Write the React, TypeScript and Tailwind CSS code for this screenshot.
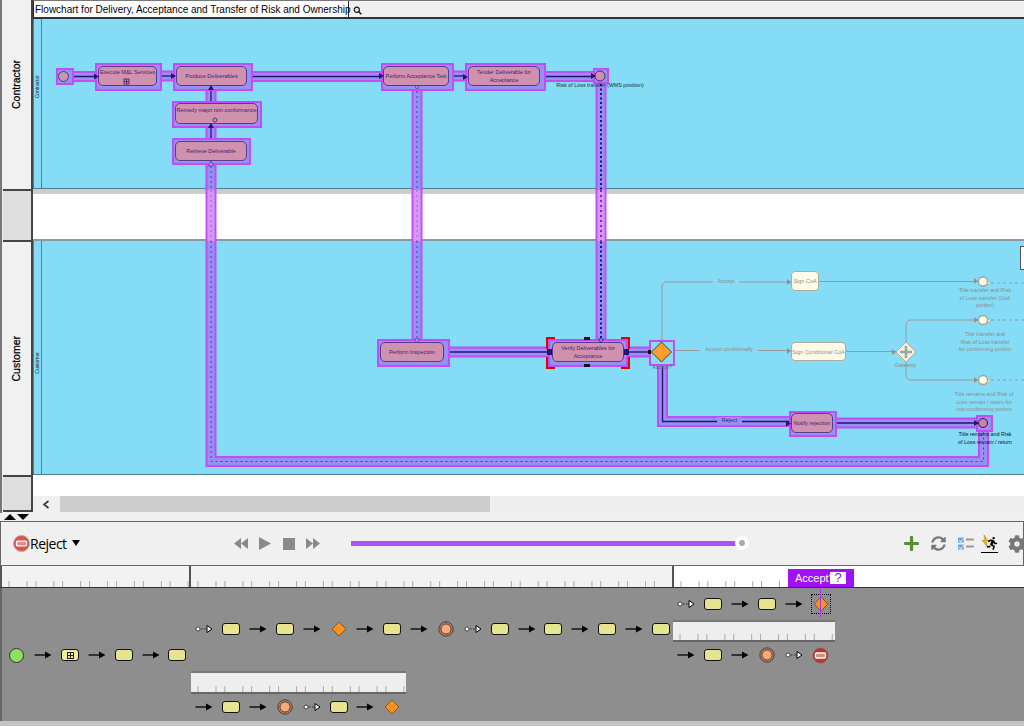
import React from "react";
import { FaCog, FaPlus, FaRunning, FaSyncAlt } from "react-icons/fa";

function Band({ d, dash, light }: { d: string; dash?: boolean; light?: boolean }) {
  return (
    <g fill="none" strokeLinejoin="miter">
      <path d={d} stroke="#c24cf6" strokeWidth={11} />
      <path d={d} stroke="#9490f5" strokeWidth={7} />
      <path d={d} stroke={light ? "#4a3ab8" : "#2a1170"} strokeWidth={light ? 1 : dash ? 2 : 1.3} strokeDasharray={dash ? (light ? "2 3" : "2 2.5") : undefined} />
    </g>
  );
}

function GapBand({ x, dark }: { x: number; dark?: boolean }) {
  return (
    <g fill="none">
      <path d={`M${x} 190V241`} stroke="#d995f8" strokeWidth={7} />
      <path d={`M${x} 190V241`} stroke={dark ? "#7a30c0" : "#a060d8"} strokeWidth={dark ? 2 : 1} strokeDasharray="2 3" />
    </g>
  );
}

function Node({ x, y, w, h, hx, hy, hw, hh, lines, plain }: { x: number; y: number; w: number; h: number; hx?: number; hy?: number; hw?: number; hh?: number; lines: string[]; plain?: boolean }) {
  return (
    <>
      {hx !== undefined && (
        <div className="absolute border-2 border-[#c24cf6] bg-[#9490f5]" style={{ left: hx, top: hy, width: hw, height: hh }} />
      )}
      <div
        className={
          plain
            ? "absolute flex flex-col items-center justify-center rounded-[4px] border border-[#b3ab98] bg-[#fffbe9] text-[5.5px] leading-[8px] text-[#8f8f8f]"
            : "absolute flex flex-col items-center justify-center rounded-[5px] border border-[#5a3a8a] bg-[#cf91ae] text-[5.5px] leading-[8px] text-[#45206e]"
        }
        style={{ left: x, top: y, width: w, height: h }}
      >
        {lines.map((l) => (
          <span key={l} className="whitespace-nowrap">{l}</span>
        ))}
      </div>
    </>
  );
}

function Label({ x, y, w, lines, cls }: { x: number; y: number; w: number; lines: string[]; cls: string }) {
  return (
    <div className={"absolute text-center text-[5.4px] leading-[7.5px] " + cls} style={{ left: x, top: y, width: w }}>
      {lines.map((l) => (
        <div key={l} className="whitespace-nowrap">{l}</div>
      ))}
    </div>
  );
}

function Ruler({ w }: { w: number }) {
  const ticks: number[] = [];
  for (let c = 0; c * 26.85 < w; c += 1) {
    ticks.push(c * 26.85 + 7, c * 26.85 + 25);
  }
  return (
    <svg width={w} height={6} className="absolute bottom-0 left-0">
      {ticks.filter((t) => t < w).map((t, i) => (
        <line key={i} x1={t} x2={t} y1={0} y2={6} stroke="#a8a8a8" />
      ))}
    </svg>
  );
}

function Cell({ children }: { children?: React.ReactNode }) {
  return <div className="flex h-5 w-[26.85px] shrink-0 items-center justify-center">{children}</div>;
}

function Arrow() {
  return (
    <svg width="18" height="10" viewBox="0 0 18 10" className="shrink-0">
      <line x1="0.5" y1="5" x2="12" y2="5" stroke="#000" strokeWidth="1.3" />
      <polygon points="11,1.5 17.5,5 11,8.5" fill="#000" />
    </svg>
  );
}

function Dotted() {
  return (
    <svg width="18" height="10" viewBox="0 0 18 10" className="shrink-0">
      <circle cx="3" cy="5" r="2" fill="#fff" stroke="#222" strokeWidth="0.8" />
      <line x1="6" y1="5" x2="12" y2="5" stroke="#222" strokeDasharray="1.5 1.5" />
      <polygon points="12,1.5 17,5 12,8.5" fill="#fff" stroke="#000" />
    </svg>
  );
}

function Task({ sub }: { sub?: boolean }) {
  return (
    <div className={"flex h-3 w-[18px] shrink-0 items-center justify-center rounded-[3px] border-[1.5px] border-[#111] " + (sub ? "bg-[#f2eba0]" : "bg-[#e6e48f]")}>
      {sub && (
        <svg width="7" height="7" viewBox="0 0 7 7">
          <rect x="0.5" y="0.5" width="6" height="6" fill="none" stroke="#222" />
          <path d="M3.5 0.5V6.5M0.5 3.5H6.5" stroke="#222" />
        </svg>
      )}
    </div>
  );
}

function Diamond() {
  return (
    <svg width="16" height="16" viewBox="0 0 16 16" className="shrink-0">
      <polygon points="8,1 15,8 8,15 1,8" fill="#f7901e" stroke="#6b4a10" strokeWidth="0.8" />
    </svg>
  );
}

function Ring() {
  return (
    <svg width="16" height="16" viewBox="0 0 16 16" className="shrink-0">
      <circle cx="8" cy="8" r="7.2" fill="#b97a55" stroke="#333" strokeWidth="0.8" />
      <circle cx="8" cy="8" r="5" fill="#fbab7b" stroke="#333" strokeWidth="0.8" />
    </svg>
  );
}

const A = () => <Cell><Arrow /></Cell>;
const D = () => <Cell><Dotted /></Cell>;
const T = () => <Cell><Task /></Cell>;
const G = () => <Cell><Diamond /></Cell>;
const R = () => <Cell><Ring /></Cell>;

function TimelineRuler({ w, cls }: { w: number; cls: string }) {
  return (
    <div className={"relative shrink-0 border-t-2 border-b-2 border-t-[#777] border-b-[#666] bg-[#eeeeee] " + cls} style={{ width: w }}>
      <Ruler w={w} />
    </div>
  );
}

export default function App() {
  return (
    <div className="flex h-[726px] w-[1024px] flex-col overflow-hidden bg-[#f0f0f0] font-['Liberation_Sans',sans-serif] text-black">
      <div className="relative flex h-[513px] shrink-0">
        <div className="flex w-[33px] shrink-0 flex-col border-l-2 border-l-[#777] pl-[1px]">
          <div className="flex h-[189px] shrink-0 items-center justify-center border-r-2 border-r-[#444] bg-[#f1f1f1] pb-[19px]">
            <span className="rotate-180 text-[10.5px] text-black [writing-mode:vertical-rl] [-webkit-text-stroke:0.25px_#000]">Contractor</span>
          </div>
          <div className="h-[53px] shrink-0 border-y-2 border-r-2 border-[#444] bg-[#dedede]" />
          <div className="flex h-[233px] shrink-0 items-center justify-center border-r-2 border-r-[#444] bg-[#f1f1f1]">
            <span className="rotate-180 text-[10.5px] text-black [writing-mode:vertical-rl] [-webkit-text-stroke:0.25px_#000]">Customer</span>
          </div>
          <div className="h-[37px] shrink-0 border-y-2 border-r-2 border-[#444] bg-[#dedede]" />
        </div>
        <div className="flex min-w-0 flex-1 flex-col">
          <div className="flex h-[19px] shrink-0 items-stretch border-t border-t-[#777] border-b-2 border-b-[#333] bg-[#f0f0f0]">
            <div className="flex w-[316px] items-center whitespace-nowrap border-x border-[#222] bg-white pl-[1px] pt-[1px] text-[10px]">
              Flowchart for Delivery, Acceptance and Transfer of Risk and Ownership
            </div>
            <div className="flex w-[16px] items-center justify-center pt-[3px]">
              <svg width="9" height="9" viewBox="0 0 9 9">
                <circle cx="3.8" cy="3.8" r="2.6" fill="none" stroke="#111" strokeWidth="1.2" />
                <path d="M5.8 5.8L8.3 8.3" stroke="#111" strokeWidth="1.5" />
              </svg>
            </div>
          </div>
          <div className="flex h-[170px] shrink-0 border-b border-b-[#4d7f8f] bg-[#84dcf6]">
            <div className="flex w-[9px] shrink-0 items-center justify-center border-x border-x-[#3f8a9f] pb-[34px]">
              <span className="rotate-180 text-[5px] text-[#222] [writing-mode:vertical-rl]">Contractor</span>
            </div>
          </div>
          <div className="h-[5px] shrink-0 bg-[#cdcdcd]" />
          <div className="h-[47px] shrink-0 border-b-[2px] border-b-[#8a9aa0] bg-white" />
          <div className="flex h-[234px] shrink-0 border-b border-b-[#4d7f8f] bg-[#84dcf6]">
            <div className="flex w-[9px] shrink-0 items-center justify-center border-x border-x-[#3f8a9f] pt-[10px]">
              <span className="rotate-180 text-[5px] text-[#222] [writing-mode:vertical-rl]">Customer</span>
            </div>
          </div>
          <div className="h-[20px] shrink-0 bg-white" />
          <div className="flex h-[17px] shrink-0 border-t border-t-white bg-[#eeeeee]">
            <div className="flex w-[27px] items-center justify-center bg-[#f0f0f0] pr-[2px]">
              <svg width="8" height="9" viewBox="0 0 8 9">
                <path d="M6.5 1L2 4.5L6.5 8" fill="none" stroke="#333" strokeWidth="1.6" />
              </svg>
            </div>
            <div className="w-[430px] bg-[#cdcdcd]" />
          </div>
        </div>

        {/* free canvas: diagram */}
        <div className="absolute inset-0">
          <svg width="1024" height="513" className="absolute left-0 top-0">
            <g fill="none" stroke="#9a9a9a" strokeWidth="1">
              <path d="M662 342V287Q662 282 667 282H791" />
              <path d="M675 350.5H791" />
              <path d="M819 281.5H978" />
              <path d="M846 351.5H896" />
              <path d="M906 342V325Q906 320 911 320H978" />
              <path d="M906 362V375Q906 380 911 380H978" />
              <path d="M991 283H1024M991 320H1024M991 380H1024" strokeDasharray="3 3" />
            </g>
            <Band d="M63 76.5H98" />
            <Band d="M157 76H176" />
            <Band d="M247 76.5H383" />
            <Band d="M449 76H468" />
            <Band d="M540 76.5H600" />
            <Band d="M211 86V103" />
            <Band d="M211 124V141" />
            <Band d="M211 161V461.5H983.5V428" dash light />
            <Band d="M417 86V342" dash light />
            <Band d="M601 84V342" dash />
            <Band d="M444 352H552" />
            <Band d="M624 352H650" />
            <Band d="M662.5 364V421.5H791" />
            <Band d="M833 423H983" />
            <GapBand x={211} />
            <GapBand x={417} />
            <GapBand x={601} dark />
          </svg>

          <div className="absolute left-[56px] top-[68px] h-[17px] w-[18px] border-2 border-[#c24cf6] bg-[#9490f5]" />
          <Node hx={95} hy={63} hw={67} hh={28} x={98} y={66} w={59} h={20} lines={["Execute M&L Services", "\u00a0"]} />
          <Node hx={173} hy={63} hw={80} hh={28} x={176} y={66} w={71} h={20} lines={["Produce Deliverables"]} />
          <Node hx={172} hy={101} hw={90} hh={27} x={175} y={103} w={83} h={21} lines={["Remedy major non-conformance", "\u00a0"]} />
          <Node hx={172} hy={138} hw={79} hh={27} x={175} y={141} w={72} h={20} lines={["Retrieve Deliverable"]} />
          <Node hx={381} hy={63} hw={73} hh={28} x={383} y={66} w={66} h={20} lines={["Perform Acceptance Test"]} />
          <Node hx={465} hy={63} hw={81} hh={28} x={468} y={66} w={72} h={20} lines={["Tender Deliverable for", "Acceptance"]} />
          <div className="absolute left-[593px] top-[68px] h-[16px] w-[16px] border-2 border-[#c24cf6] bg-[#9490f5]" />
          <Node hx={377} hy={339} hw={73} hh={28} x={380} y={342} w={64} h={20} lines={["Perform Inspection"]} />

          {/* selection corners */}
          <div className="absolute left-[546px] top-[337px] h-[12px] w-[9px] border-l-[3px] border-t-[3px] border-[#e00000]" />
          <div className="absolute left-[621px] top-[337px] h-[12px] w-[9px] border-r-[3px] border-t-[3px] border-[#e00000]" />
          <div className="absolute left-[546px] top-[357px] h-[12px] w-[9px] border-b-[3px] border-l-[3px] border-[#e00000]" />
          <div className="absolute left-[621px] top-[357px] h-[12px] w-[9px] border-b-[3px] border-r-[3px] border-[#e00000]" />
          <Node hx={548} hy={339} hw={80} hh={28} x={552} y={342} w={72} h={20} lines={["Verify Deliverables for", "Acceptance"]} />

          <div className="absolute left-[649px] top-[340px] h-[26px] w-[26px] border-2 border-[#c24cf6] bg-[#84dcf6]" />
          <Node hx={789} hy={411} hw={48} hh={26} x={791} y={413} w={42} h={20} lines={["Notify rejection"]} />
          <div className="absolute left-[976px] top-[415px] h-[17px] w-[17px] border-2 border-[#c24cf6] bg-[#9490f5]" />
          <Node plain x={791} y={271} w={28} h={20} lines={["Sign CoA"]} />
          <Node plain x={791} y={342} w={55} h={19} lines={["Sign Conditional CoA"]} />

          <div className="absolute left-[1020px] top-[246px] h-[24px] w-[4px] border-y border-l border-[#555] bg-white" />

          <Label x={540} y={82} w={120} cls="text-[#1a3040]" lines={["Risk of Loss transfer (WMS position)"]} />
          <Label x={945} y={287} w={80} cls="text-[#8c8c8c]" lines={["Title transfer and Risk", "of Loss transfer (CoA", "portion)"]} />
          <Label x={945} y={331} w={80} cls="text-[#8c8c8c]" lines={["Title transfer and", "Risk of Loss transfer", "for conforming portion"]} />
          <Label x={944} y={391} w={80} cls="text-[#8c8c8c]" lines={["Title remains and Risk of", "Loss remain / return for", "non-conforming portion"]} />
          <Label x={945} y={431} w={80} cls="text-[#101820]" lines={["Title remains and Risk", "of Loss remain / return"]} />
          <Label x={895} y={362} w={20} cls="text-[#8c8c8c]" lines={["Gateway"]} />
          <Label x={652} y={364} w={20} cls="text-[#5a6a8a]" lines={["Accept?"]} />
          <Label x={713} y={278} w={26} cls="bg-[#84dcf6] text-[#8c8c8c]" lines={["Accept"]} />
          <Label x={700} y={346} w={58} cls="bg-[#84dcf6] text-[#8c8c8c]" lines={["Accept conditionally"]} />
          <Label x={717} y={417} w={25} cls="bg-[#9490f5] text-[#45206e]" lines={["Reject"]} />

          <svg width="1024" height="513" className="pointer-events-none absolute left-0 top-0">
            <circle cx="63.5" cy="76.5" r="5" fill="#c795b2" stroke="#4a3a7a" />
            <circle cx="600" cy="76" r="5" fill="#cf91ae" stroke="#4a2a70" />
            <circle cx="983" cy="423" r="4.5" fill="#cf7fa0" stroke="#2a1a50" />
            <circle cx="215" cy="120" r="2" fill="#cf91ae" stroke="#3a1a70" strokeWidth="0.8" />
            <g fill="none" stroke="#3a1a70" strokeWidth="0.8">
              <rect x="124" y="79" width="5" height="5" />
              <path d="M126.5 79V84M124 81.5H129" />
            </g>
            <g fill="#2a1170">
              <polygon points="94,73.5 99,76.5 94,79.5" />
              <polygon points="171,73 176,76 171,79" />
              <polygon points="379,73 384,76 379,79" />
              <polygon points="463,74 468,77 463,80" />
              <polygon points="591,73 596,76 591,79" />
              <polygon points="208,90 211,85 214,90" />
              <polygon points="208,128 211,123 214,128" />
              <polygon points="786,420.5 791,423.5 786,426.5" />
              <polygon points="974,420 979,423 974,426" />
              <rect x="547" y="349" width="5" height="6" />
              <rect x="624" y="349" width="5" height="6" />
              <rect x="648" y="350" width="3" height="4" fill="#111" />
            </g>
            <rect x="584" y="337" width="6" height="3" fill="#111" />
            <rect x="584" y="364" width="6" height="3" fill="#111" />
            <polygon points="211,161 208.5,166 213.5,166" fill="#c8a0f8" stroke="#3a1a80" strokeWidth="0.6" />
            <polygon points="414.5,339 417,343 419.5,339" fill="#c8a0f8" stroke="#3a1a80" strokeWidth="0.6" />
            <polygon points="598.5,339 601,343 603.5,339" fill="#9490f5" stroke="#2a1170" strokeWidth="0.7" />
            <circle cx="417" cy="87" r="1.5" fill="#c8a0f8" stroke="#3a1a80" strokeWidth="0.6" />
            <polygon points="661.5,342 671.5,352 661.5,362 651.5,352" fill="#fd9f2c" stroke="#222" strokeWidth="0.8" />
            <g fill="#8f8f8f">
              <polygon points="787,279 791,282 787,285" />
              <polygon points="787,348 791,351 787,354" />
              <polygon points="892,349 896,352 892,355" />
              <polygon points="974,278 978,281 974,284" />
              <polygon points="974,317 978,320 974,323" />
              <polygon points="974,377 978,380 974,383" />
            </g>
            <polygon points="906,342 916,352 906,362 896,352" fill="#f8efd8" stroke="#b3ab98" />
            <path d="M906 346V358M900 352H912" stroke="#9aa8ae" strokeWidth="2.5" />
            <g fill="#fffbe9" stroke="#a89f95" strokeWidth="1.3">
              <circle cx="983" cy="281.5" r="4.5" />
              <circle cx="983" cy="320" r="4.5" />
              <circle cx="983" cy="380" r="4.5" />
            </g>
            <g fill="#fff" stroke="#a89f95" strokeWidth="0.7">
              <circle cx="989" cy="283" r="1.4" />
              <circle cx="989" cy="321" r="1.4" />
              <circle cx="989" cy="381" r="1.4" />
            </g>
          </svg>
        </div>
      </div>

      {/* splitter */}
      <div className="flex h-[8px] shrink-0 items-center gap-[1px] pl-[4px]">
        <svg width="12" height="6" viewBox="0 0 12 6"><polygon points="6,0 12,6 0,6" fill="#000" /></svg>
        <svg width="12" height="6" viewBox="0 0 12 6"><polygon points="0,0 12,0 6,6" fill="#000" /></svg>
      </div>

      {/* toolbar */}
      <div className="flex h-[45px] shrink-0 items-center border-y border-x border-[#666] bg-[#f0f0f0]">
        <div className="flex w-[233px] shrink-0 items-center pl-[12px]">
          <svg width="17" height="17" viewBox="0 0 17 17" className="shrink-0">
            <circle cx="8.5" cy="8.5" r="8" fill="#d9534f" stroke="#b0b0b0" />
            <rect x="3.5" y="6.2" width="10" height="4.6" rx="1" fill="#e88" stroke="#fff" strokeWidth="1.3" />
          </svg>
          <span className="font-['Open_Sans',sans-serif] text-[14px] tracking-[-0.5px]">Reject</span>
          <svg width="8" height="6" viewBox="0 0 8 6" className="mb-[2px] ml-[5px]"><polygon points="0,0 8,0 4,6" fill="#000" /></svg>
        </div>
        <div className="flex w-[86px] shrink-0 items-center justify-between">
          <svg width="14" height="11" viewBox="0 0 14 11"><polygon points="7,0 7,11 0,5.5" fill="#8a8a8a" /><polygon points="14,0 14,11 7,5.5" fill="#8a8a8a" /></svg>
          <svg width="12" height="13" viewBox="0 0 12 13"><polygon points="0,0 12,6.5 0,13" fill="#8a8a8a" /></svg>
          <div className="h-[12px] w-[12px] bg-[#8a8a8a]" />
          <svg width="14" height="11" viewBox="0 0 14 11"><polygon points="0,0 7,5.5 0,11" fill="#8a8a8a" /><polygon points="7,0 14,5.5 7,11" fill="#8a8a8a" /></svg>
        </div>
        <div className="relative ml-[31px] h-[5px] w-[391px] shrink-0 bg-[#b14ff0]">
          <div className="absolute -right-[7px] -top-[5px] flex h-[14px] w-[14px] items-center justify-center rounded-full bg-white">
            <div className="h-[6px] w-[6px] rounded-full bg-[#aaaaaa]" />
          </div>
        </div>
        <div className="ml-[161px] flex shrink-0 items-center gap-[8px]">
          <FaPlus className="h-[17px] w-[17px] text-[#4f8f3f]" />
          <FaSyncAlt className="ml-[3px] h-[15px] w-[15px] text-[#777777]" />
          <svg width="17" height="13" viewBox="0 0 17 13" className="ml-[4px]">
            <rect x="0" y="0.5" width="6" height="5" fill="#6fa8dc" />
            <rect x="0" y="7.5" width="6" height="5" fill="#6fa8dc" />
            <path d="M1 3l2 2 3-4M1 10l2 2 3-4" stroke="#fff" fill="none" strokeWidth="0.8" />
            <rect x="8" y="1.5" width="8" height="2" fill="#9a9a9a" />
            <rect x="8" y="8.5" width="8" height="2" fill="#9a9a9a" />
          </svg>
          <div className="relative ml-[-2px] h-[18px] w-[17px] border-b-[1.5px] border-b-black">
            <svg width="8" height="15" viewBox="0 0 8 15" className="absolute left-0 top-0">
              <polygon points="3,0 7.5,6 5,6 7,13 1,5 3.5,5.5" fill="#f0b41c" stroke="#8a6a10" strokeWidth="0.4" />
            </svg>
            <FaRunning className="absolute right-0 top-[2px] h-[13px] w-[12px] text-black" />
          </div>
          <FaCog className="ml-[2px] h-[18px] w-[18px] text-[#777777]" />
        </div>
      </div>

      {/* ruler */}
      <div className="relative flex h-[22px] shrink-0 border-b border-b-[#333]">
        <div className="relative w-[191px] shrink-0 border-l-2 border-r-2 border-[#555] bg-[#f2f2f2]"><Ruler w={187} /></div>
        <div className="relative w-[483px] shrink-0 border-r-2 border-[#555] bg-[#f2f2f2]"><Ruler w={481} /></div>
        <div className="relative w-[161px] shrink-0 bg-white"><Ruler w={161} /></div>
        <div className="flex-1 bg-white" />
        <div className="absolute left-[788px] top-[3px] flex h-[18px] w-[66px] items-center bg-[#a010f8] pl-[7px] text-[11px] text-white">
          Accept?
          <span className="absolute left-[42px] top-[3px] flex h-[12px] w-[16px] items-center justify-center bg-white text-[13px] text-[#7a20c8]">?</span>
        </div>
      </div>

      {/* timeline */}
      <div className="relative flex min-h-0 flex-1 border-l-2 border-l-[#666] bg-[#8e8e8e]">
        <div className="flex w-[189px] shrink-0 flex-col pl-px pt-[57px]">
          <div className="flex">
            <Cell>
              <div className="h-[15px] w-[15px] rounded-full border border-[#333] bg-[#8fe05c]" />
            </Cell>
            <A />
            <Cell><Task sub /></Cell>
            <A />
            <T />
            <A />
            <T />
          </div>
        </div>
        <div className="flex w-[482px] shrink-0 flex-col pt-[31px]">
          <div className="flex">
            <D /><T /><A /><T /><A /><G /><A /><T /><A /><R /><D /><T /><A /><T /><A /><T /><A /><T />
          </div>
          <TimelineRuler w={215} cls="mt-[32px] h-[23px]" />
          <div className="mt-[3px] flex">
            <A /><T /><A /><R /><D /><T /><A /><G />
          </div>
        </div>
        <div className="flex w-[162px] shrink-0 flex-col pt-[6px]">
          <div className="flex">
            <D /><T /><A /><T /><A />
            <Cell>
              <div className="relative flex h-[20px] w-[20px] items-center justify-center border border-dotted border-black">
                <Diamond />
              </div>
            </Cell>
          </div>
          <TimelineRuler w={162} cls="mt-[6px] h-[22px]" />
          <div className="mt-[3px] flex">
            <A /><T /><A /><R /><D />
            <Cell>
              <svg width="17" height="17" viewBox="0 0 17 17">
                <circle cx="8.5" cy="8.5" r="8" fill="#b5372e" stroke="#8a8a8a" />
                <rect x="3.5" y="6" width="10" height="5" rx="1" fill="#d98a80" stroke="#fff" strokeWidth="1.3" />
              </svg>
            </Cell>
          </div>
        </div>
        <div className="absolute left-[818px] top-0 h-[29px] w-px bg-[#b030f0]" />
      </div>
      <div className="h-[5px] shrink-0 bg-[#c4c4c4]" />
    </div>
  );
}
